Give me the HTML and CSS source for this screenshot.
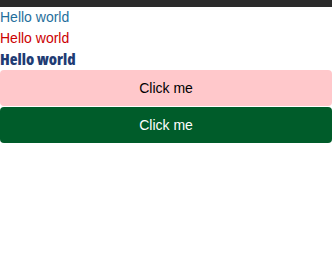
FILE: index.html
```html
<!DOCTYPE html>
<html lang="en">
<head>
  <meta charset="UTF-8">
  <meta name="viewport" content="width=device-width, initial-scale=1.0">
  <title>Hello world</title>
  <link rel="stylesheet" href="styles.css">
</head>
<body>
  <div class="topbar"></div>

  <div class="line blue">Hello world</div>
  <div class="line red">Hello world</div>
  <div class="line heavy">Hello world</div>

  <button class="btn btn-light">Click me</button>
  <button class="btn btn-dark">Click me</button>
</body>
</html>
```

FILE: styles.css
```css
body {
  margin: 0;
  font-family: "Liberation Sans", Arial, sans-serif;
  font-size: 14px;
  background-color: #fff;
}

.topbar {
  height: 7px;
  background-color: #2b2b2b;
}

.line {
  line-height: 21px;
}

.blue {
  color: #1f6f9c;
}

.red {
  color: #cc0000;
}

.heavy {
  font-family: "Open Sans", sans-serif;
  font-size: 16px;
  font-weight: 800;
  font-stretch: 80%;
  color: #1f3c74;
}

.btn {
  display: block;
  width: 100%;
  height: 36px;
  margin-bottom: 1px;
  border: none;
  border-radius: 4px;
  font-family: "Liberation Sans", Arial, sans-serif;
  font-size: 14px;
}

.btn-light {
  background-color: #ffc8cb;
  color: #000;
}

.btn-dark {
  background-color: #005c2a;
  color: #fff;
}
```
